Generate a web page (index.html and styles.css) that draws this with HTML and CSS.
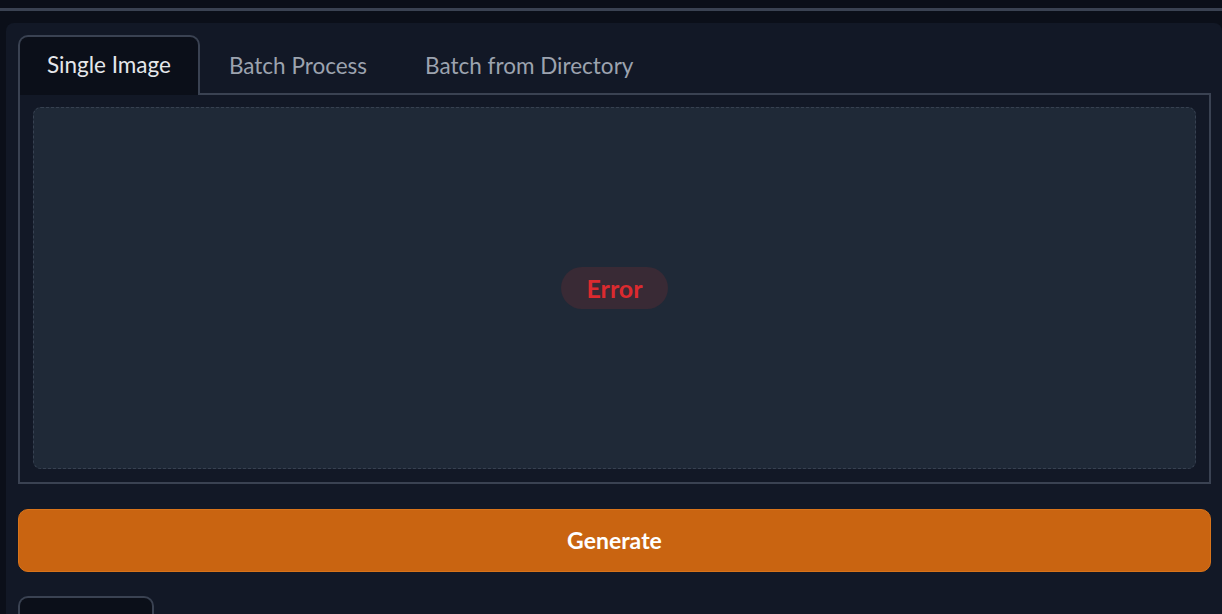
FILE: index.html
```html
<!DOCTYPE html>
<html>
<head>
<meta charset="utf-8">
<link rel="stylesheet" href="styles.css">
</head>
<body>
<div class="topline"></div>
<div class="panel">
  <div class="tabs">
    <button class="tab selected">Single Image</button>
    <button class="tab">Batch Process</button>
    <button class="tab">Batch from Directory</button>
  </div>
  <div class="tabbody">
    <div class="drop">
      <span class="error">Error</span>
    </div>
  </div>
  <button class="generate">Generate</button>
  <div class="tabs bottom">
    <div class="tab selected stub"></div>
  </div>
</div>
</body>
</html>
```
FILE: styles.css
```css
html, body {
  margin: 0;
  padding: 0;
  background: #0b0f19;
  overflow: hidden;
  height: 614px;
  font-family: "Lato", "Noto Sans", sans-serif;
}
.topline {
  margin-top: 8px;
  height: 3px;
  background: #3a4252;
}
.panel {
  margin: 12px 0 0 6px;
  background: #121826;
  border-radius: 8px 8px 0 0;
  padding: 12px 11px 0 12px;
  height: 580px;
}
.tabs {
  display: flex;
  align-items: flex-end;
  height: 60px;
  position: relative;
  z-index: 1;
  margin-bottom: -2px;
}
.tab {
  height: 58px;
  padding: 0 27px 4px 27px;
  border: 2px solid transparent;
  border-bottom: none;
  border-radius: 10px 10px 0 0;
  background: transparent;
  color: #9ca3af;
  font-family: inherit;
  font-size: 22.5px;
  box-sizing: border-box;
}
.tab.selected {
  background: #0b0f19;
  border-color: #3a4252;
  color: #e5e7eb;
  height: 60px;
}
.tabbody {
  border: 2px solid #3a4252;
  padding: 12px 13px 13px 13px;
}
.drop {
  height: 362px;
  background: #1f2937;
  border: 1px dashed #374151;
  border-radius: 8px;
  box-sizing: border-box;
  display: flex;
  align-items: center;
  justify-content: center;
}
.error {
  display: inline-block;
  height: 42px;
  line-height: 42px;
  width: 107px;
  text-align: center;
  border-radius: 21px;
  background: #392a35;
  color: #dc2a2f;
  font-weight: 700;
  font-size: 25px;
}
.generate {
  display: block;
  width: 100%;
  margin-top: 25px;
  height: 63px;
  border: 1px solid #d8731a;
  border-radius: 10px;
  background: #c96411;
  color: #ffffff;
  font-family: inherit;
  font-weight: 700;
  font-size: 23px;
  padding-bottom: 2px;
}
.tabs.bottom {
  margin-top: 24px;
}
.stub {
  width: 136px;
}
```
